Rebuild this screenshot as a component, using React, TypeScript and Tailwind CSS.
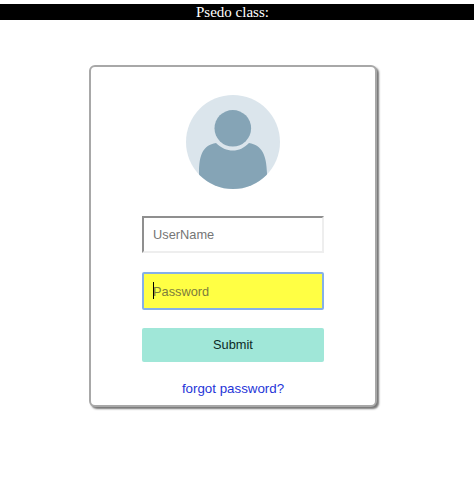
const App = () => {
  return (
    <div className="min-h-[504px] bg-white pt-[4px]">
      <div className="h-[16px] bg-black pr-[9px] text-center font-['Liberation_Serif',serif] text-[15px] leading-[16px] text-white">
        Psedo class:
      </div>

      <div className="ml-[89px] mt-[45px] flex h-[342px] w-[288px] flex-col items-center rounded-[6px] border-2 border-[#a8a8a8] bg-white pt-[28px] shadow-[2px_2px_2px_#777777]">
        <svg viewBox="0 0 94 94" className="h-[94px] w-[94px]">
          <defs>
            <clipPath id="avatar-clip">
              <circle cx="47" cy="47" r="47" />
            </clipPath>
          </defs>
          <circle cx="47" cy="47" r="47" fill="#dbe5ec" />
          <g clipPath="url(#avatar-clip)" fill="#85a4b6">
            <circle cx="46.8" cy="33.3" r="18.3" />
            <path d="M13 78 C13 60 17 50 30 48 C35 53 41 55.5 46.8 55.5 C53 55.5 58 53 63 48 C76 50 80.5 60 81 78 L81 94 L13 94 Z" />
          </g>
        </svg>

        <div className="mt-[27px] flex w-[182px] flex-col font-['Liberation_Sans',sans-serif]">
          <input
            placeholder="UserName"
            className="h-[37px] w-full border-2 border-t-[#8f8f8f] border-r-[#eeeeee] border-b-[#eeeeee] border-l-[#8f8f8f] bg-white px-[9px] text-[12.8px] outline-none placeholder:text-[#757575]"
          />
          <div className="relative mt-[19px]">
            <input
              placeholder="Password"
              className="h-[38px] w-full rounded-[2px] border-2 border-[#85b0e8] bg-[#ffff44] px-[9px] text-[12.8px] outline-none placeholder:text-[#7d7d3c]"
            />
            <span className="absolute left-[11px] top-[10px] h-[17px] w-px bg-black" />
          </div>
          <button className="mt-[18px] h-[34px] w-full rounded-[2px] bg-[#a0e7d8] text-[12.8px] text-[#0c2a26]">
            Submit
          </button>
          <a href="#" className="mt-[18px] text-center text-[13.33px] leading-[18px] text-[#1f35d8]">
            forgot password?
          </a>
        </div>
      </div>
    </div>
  );
};

export default App;
